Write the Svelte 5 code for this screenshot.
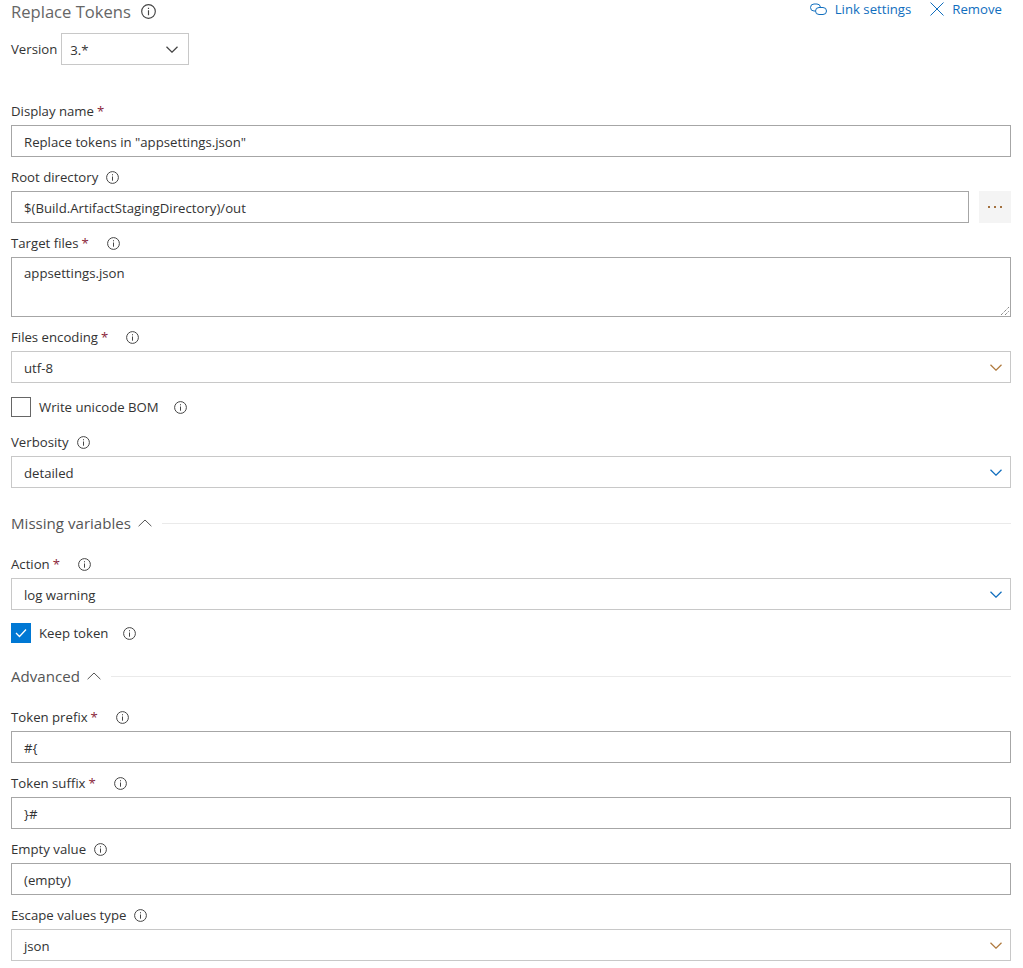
<style>
    :global(body) {
        background: #fff;
    }
    main {
        width: 1000px;
        padding-left: 11px;
        font-family: "Open Sans", sans-serif;
        font-size: 13.2px;
        color: #333;
    }
    .head {
        display: flex;
        justify-content: space-between;
        height: 24px;
    }
    .title {
        display: flex;
        align-items: center;
        gap: 10px;
        font-size: 16.6px;
        color: #666;
        padding-bottom: 1px;
    }
    .actions {
        display: flex;
        gap: 19px;
        padding-right: 9px;
        height: 18px;
        color: #106ebe;
    }
    .actions span {
        display: flex;
        align-items: center;
        gap: 8px;
    }
    .version {
        display: flex;
        align-items: center;
        gap: 4px;
        margin-top: 9px;
        margin-bottom: 36px;
    }
    .field {
        margin-bottom: 10px;
    }
    .lbl {
        display: flex;
        align-items: center;
        height: 20px;
        margin-bottom: 4px;
    }
    .req {
        color: #8a1f3a;
        margin-left: 3px;
    }
    .lbl svg {
        margin-left: 8px;
    }
    .lbl .req + svg {
        margin-left: 18px;
    }
    .box {
        box-sizing: border-box;
        height: 32px;
        display: flex;
        align-items: center;
        justify-content: space-between;
        padding: 1px 12px 0;
        border: 1px solid #a6a6a6;
        background: #fff;
    }
    .select {
        border-color: #c8c8c8;
        padding-right: 8px;
    }
    .small {
        width: 128px;
        padding: 1px 10px 0 8px;
    }
    .row {
        display: flex;
        gap: 10px;
    }
    .row .box {
        flex: 1;
    }
    .more {
        width: 32px;
        height: 32px;
        background: #f4f4f4;
        display: flex;
        align-items: center;
        justify-content: center;
    }
    .area {
        height: 60px;
        align-items: flex-start;
        padding-top: 6px;
        position: relative;
    }
    .grip {
        position: absolute;
        right: 0;
        bottom: 0;
    }
    .check {
        display: flex;
        align-items: center;
        height: 20px;
    }
    .tick {
        box-sizing: border-box;
        width: 20px;
        height: 20px;
        border: 1px solid #666;
        margin-right: 8px;
        display: flex;
        align-items: center;
        justify-content: center;
    }
    .tick.on {
        background: #0078d4;
        border-color: #0078d4;
    }
    .check :global(.info) {
        margin-left: 15px;
    }
    .sec {
        display: flex;
        align-items: center;
        height: 24px;
        font-size: 15.1px;
        color: #555;
    }
    .sec svg {
        margin-left: 7px;
    }
    .sec i {
        flex: 1;
        height: 1px;
        background: #eaeaea;
        margin-left: 10px;
    }
    .wub {
        margin: 14px 0 15px;
    }
    .s1 {
        margin-top: 23px;
        margin-bottom: 19px;
    }
    .kt {
        margin-top: 13px;
    }
    .s2 {
        margin-top: 21px;
        margin-bottom: 19px;
    }
</style>

{#snippet info(size = 13)}
    <svg class="info" width={size} height={size} viewBox="0 0 13 13" fill="none" stroke="#444">
        <circle cx="6.5" cy="6.5" r="5.9" />
        <path d="M6.5 5.5v4.2M6.5 3.2v1.1" />
    </svg>
{/snippet}

{#snippet chevron(color = "#555")}
    <svg width="12" height="7" viewBox="0 0 12 7" fill="none" stroke={color} stroke-width="1.25">
        <path d="M.5 .8l5.5 5.4 5.5-5.4" />
    </svg>
{/snippet}

{#snippet up()}
    <svg width="14" height="8" viewBox="0 0 14 8" fill="none" stroke="#555">
        <path d="M.6 7.2L7 1l6.4 6.2" />
    </svg>
{/snippet}

{#snippet label(text, required, hasInfo = true)}
    <div class="lbl">
        {text}
        {#if required}<span class="req">*</span>{/if}
        {#if hasInfo}{@render info()}{/if}
    </div>
{/snippet}

{#snippet input(text)}
    <div class="box">{text}</div>
{/snippet}

{#snippet select(text, color)}
    <div class="box select">{text}{@render chevron(color)}</div>
{/snippet}

<main>
    <div class="head">
        <div class="title">Replace Tokens {@render info(15)}</div>
        <div class="actions">
            <span>
                <svg width="17" height="12" viewBox="0 0 17 12" fill="none" stroke="#106ebe">
                    <path d="M5 8H4a3.5 3.5 0 1 1 0-7h3a3.5 3.5 0 0 1 3.4 3" />
                    <rect x="5.5" y="4.5" width="11" height="7" rx="3.5" />
                </svg>
                Link settings
            </span>
            <span>
                <svg width="14" height="14" viewBox="0 0 14 14" fill="none" stroke="#106ebe">
                    <path d="M.5 .5l13 13M13.5 .5l-13 13" />
                </svg>
                Remove
            </span>
        </div>
    </div>

    <div class="version">
        Version
        <div class="box select small">3.*{@render chevron("#444")}</div>
    </div>

    <div class="field">
        {@render label("Display name", true, false)}
        {@render input('Replace tokens in "appsettings.json"')}
    </div>
    <div class="field">
        {@render label("Root directory", false)}
        <div class="row">
            {@render input("$(Build.ArtifactStagingDirectory)/out")}
            <div class="more">
                <svg width="14" height="2" viewBox="0 0 14 2" fill="#a3713f">
                    <rect x="0" y="0" width="2" height="2" />
                    <rect x="6" y="0" width="2" height="2" />
                    <rect x="12" y="0" width="2" height="2" />
                </svg>
            </div>
        </div>
    </div>
    <div class="field">
        {@render label("Target files", true)}
        <div class="box area">
            appsettings.json
            <svg class="grip" width="10" height="10" viewBox="0 0 10 10" stroke="#555" stroke-dasharray="1 1">
                <path d="M1 9l8-8M5 9l4-4" />
            </svg>
        </div>
    </div>
    <div class="field">
        {@render label("Files encoding", true)}
        {@render select("utf-8", "#b07a3e")}
    </div>
    <div class="check wub">
        <div class="tick"></div>
        Write unicode BOM
        {@render info()}
    </div>
    <div class="field">
        {@render label("Verbosity", false)}
        {@render select("detailed", "#106ebe")}
    </div>

    <div class="sec s1">Missing variables {@render up()}<i></i></div>

    <div class="field">
        {@render label("Action", true)}
        {@render select("log warning", "#106ebe")}
    </div>
    <div class="check kt">
        <div class="tick on">
            <svg width="12" height="10" viewBox="0 0 12 10" fill="none" stroke="#fff" stroke-width="1.3">
                <path d="M1 5l3.5 3.5L11 1.5" />
            </svg>
        </div>
        Keep token
        {@render info()}
    </div>

    <div class="sec s2">Advanced {@render up()}<i></i></div>

    <div class="field">
        {@render label("Token prefix", true)}
        {@render input("#{")}
    </div>
    <div class="field">
        {@render label("Token suffix", true)}
        {@render input("}#")}
    </div>
    <div class="field">
        {@render label("Empty value", false)}
        {@render input("(empty)")}
    </div>
    <div class="field">
        {@render label("Escape values type", false)}
        {@render select("json", "#b07a3e")}
    </div>
</main>
